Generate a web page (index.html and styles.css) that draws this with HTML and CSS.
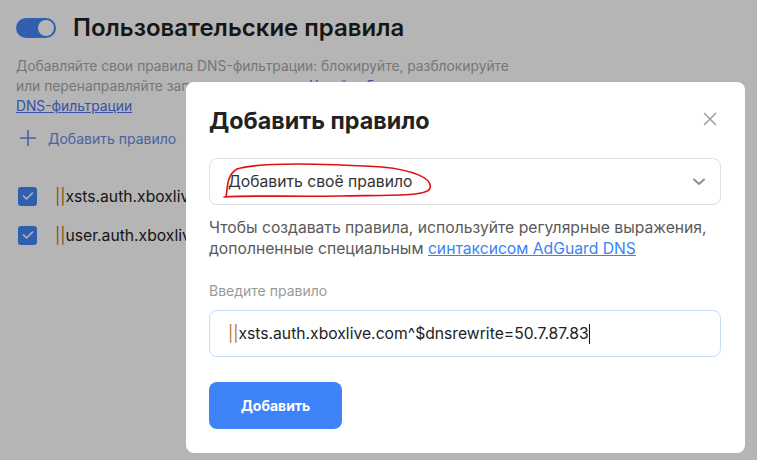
FILE: index.html
```html
<!DOCTYPE html>
<html lang="ru">
  <head>
    <meta charset="UTF-8" />
    <meta name="viewport" content="width=device-width, initial-scale=1.0" />
    <title>Пользовательские правила</title>
    <link rel="stylesheet" href="styles.css">
  </head>
  <body>
    <div class="page">
      <!-- заголовок раздела -->
      <div class="section-head">
        <span class="toggle"><span class="toggle-knob"></span></span>
        <h1>Пользовательские правила</h1>
      </div>
      <p class="section-desc">
        Добавляйте свои правила DNS-фильтрации: блокируйте, разблокируйте<br>
        или перенаправляйте запросы к доменам. <a href="#">Узнайте больше о правилах<br>DNS-фильтрации</a>
      </p>

      <button class="add-link">
        <svg width="18" height="18" viewBox="0 0 18 18"><path d="M9 1v16M1 9h16" stroke="currentColor" stroke-width="1.6" fill="none"/></svg>
        Добавить правило
      </button>

      <!-- список правил -->
      <ul class="rules">
        <li class="rule">
          <span class="check"><svg width="12" height="10" viewBox="0 0 12 10"><path d="M1.5 5l3 3 6-6" stroke="#fff" stroke-width="1.6" fill="none" stroke-linecap="round" stroke-linejoin="round"/></svg></span>
          <span class="rule-text"><span class="pipes">||</span>xsts.auth.xboxlive.com^$dnsrewrite=50.7.87.83</span>
        </li>
        <li class="rule">
          <span class="check"><svg width="12" height="10" viewBox="0 0 12 10"><path d="M1.5 5l3 3 6-6" stroke="#fff" stroke-width="1.6" fill="none" stroke-linecap="round" stroke-linejoin="round"/></svg></span>
          <span class="rule-text"><span class="pipes">||</span>user.auth.xboxlive.com^$dnsrewrite=50.7.87.83</span>
        </li>
      </ul>
    </div>

    <div class="overlay"></div>

    <!-- модальное окно -->
    <div class="modal">
      <div class="modal-head">
        <h2>Добавить правило</h2>
        <button class="close">
          <svg width="16" height="16" viewBox="0 0 16 16"><path d="M2 2l12 12M14 2L2 14" stroke="#9aa0a6" stroke-width="1.5" fill="none"/></svg>
        </button>
      </div>

      <div class="select">
        <span>Добавить своё правило</span>
        <svg width="14" height="8" viewBox="0 0 14 8"><path d="M2 1.5l5 4.5 5-4.5" stroke="#8a9096" stroke-width="2" fill="none" stroke-linecap="round" stroke-linejoin="round"/></svg>
      </div>

      <p class="hint">
        Чтобы создавать правила, используйте регулярные выражения,<br>
        дополненные специальным <a href="#">синтаксисом AdGuard DNS</a>
      </p>

      <label class="field-label">Введите правило</label>
      <div class="input">
        <span class="pipes">||</span>xsts.auth.xboxlive.com^$dnsrewrite=50.7.87.83<span class="caret"></span>
      </div>

      <button class="btn-primary">Добавить</button>
    </div>

    <!-- пометка от руки -->
    <svg class="scribble" width="757" height="460" viewBox="0 0 757 460">
      <path d="M226 197 C228 187 226 176 237 169 C262 161 330 164 382 167 C412 170 433 178 430 188 C428 196 400 195 340 196 C290 197 250 195 224 197" stroke="#e01010" stroke-width="1.6" fill="none" stroke-linecap="round"/>
    </svg>
  </body>
</html>
```

FILE: styles.css
```css
body {
  margin: 0;
  font-family: Inter, "Noto Sans", sans-serif;
  background: #fff;
  color: #222;
  overflow: hidden;
}

.page {
  padding: 14px 16px;
}

.section-head {
  display: flex;
  align-items: center;
  gap: 17px;
}

.toggle {
  width: 40px;
  height: 20px;
  border-radius: 10px;
  background: #4487f8;
  display: flex;
  align-items: center;
  justify-content: flex-end;
  padding: 0 2px;
  box-sizing: border-box;
}

.toggle-knob {
  width: 16px;
  height: 16px;
  border-radius: 50%;
  background: #fff;
}

h1 {
  margin: 0;
  font-size: 24px;
  font-weight: 600;
  line-height: 28px;
  color: #1f1f1f;
}

.section-desc {
  margin: 14px 0 0;
  font-size: 13.8px;
  line-height: 20px;
  color: #a8a8a8;
}

.section-desc a {
  color: #4f72f0;
}

.add-link {
  margin-top: 13px;
  display: flex;
  align-items: center;
  gap: 11px;
  padding: 0 0 0 3px;
  border: none;
  background: none;
  font-family: inherit;
  font-size: 14px;
  color: #6a8ae8;
}

.rules {
  list-style: none;
  margin: 39px 0 0;
  padding: 0;
}

.rule {
  display: flex;
  align-items: center;
  gap: 18px;
  height: 20px;
  margin-bottom: 19px;
  padding-left: 2px;
}

.check {
  width: 19px;
  height: 19px;
  border-radius: 3px;
  background: #4487f8;
  display: flex;
  align-items: center;
  justify-content: center;
}

.rule-text {
  font-size: 15.7px;
  color: #222;
}

.pipes {
  color: #b8741a;
}

.overlay {
  position: fixed;
  inset: 0;
  background: rgba(0, 0, 0, 0.29);
}

.modal {
  position: fixed;
  left: 186px;
  top: 82px;
  width: 559px;
  height: 371px;
  box-sizing: border-box;
  padding: 22px 24px 24px 23px;
  background: #fff;
  border-radius: 8px;
}

.modal-head {
  display: flex;
  align-items: center;
  justify-content: space-between;
  height: 32px;
}

h2 {
  margin: 0;
  font-size: 23.3px;
  font-weight: 700;
  color: #222;
}

.close {
  border: none;
  background: none;
  padding: 0;
  margin: -3px 3px 0 0;
  display: flex;
}

.select {
  margin-top: 22px;
  height: 47px;
  box-sizing: border-box;
  border: 1px solid #dedfe2;
  border-radius: 8px;
  display: flex;
  align-items: center;
  justify-content: space-between;
  padding: 0 14px 0 18px;
  font-size: 15.7px;
  color: #333;
}

.hint {
  margin: 12px 0 0;
  font-size: 15.7px;
  line-height: 21px;
  color: #5a5a5a;
}

.hint a {
  color: #3a82f7;
}

.field-label {
  display: block;
  margin-top: 22px;
  font-size: 14px;
  line-height: 20px;
  color: #9a9a9a;
}

.input {
  margin-top: 9px;
  height: 47px;
  box-sizing: border-box;
  border: 1px solid #c9dcf7;
  border-radius: 8px;
  display: flex;
  align-items: center;
  padding: 0 18px;
  font-size: 15.7px;
  color: #222;
}

.caret {
  width: 1px;
  height: 20px;
  background: #111;
}

.btn-primary {
  margin-top: 25px;
  width: 133px;
  height: 47px;
  border: none;
  border-radius: 8px;
  background: #3f83f8;
  color: #fff;
  font-family: inherit;
  font-size: 14px;
  font-weight: 700;
}

.scribble {
  position: fixed;
  left: 0;
  top: 0;
  pointer-events: none;
}
```
